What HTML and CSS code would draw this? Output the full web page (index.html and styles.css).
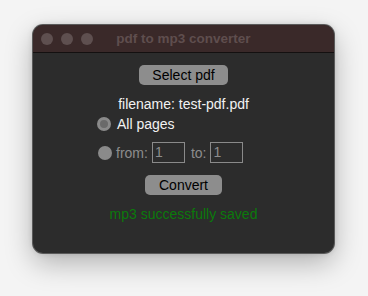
FILE: index.html
```html
<!DOCTYPE html>
<html>
<head>
<meta charset="utf-8">
<link rel="stylesheet" href="styles.css">
</head>
<body>
<div class="window">
  <div class="titlebar">
    <div class="lights"><span class="light"></span><span class="light"></span><span class="light"></span></div>
    <div class="title">pdf to mp3 converter</div>
  </div>
  <div class="content">
    <div class="btn btn-select">Select pdf</div>
    <div class="filename">filename: test-pdf.pdf</div>
    <div class="options">
      <div class="row row-all">
        <span class="radio radio-on"></span>
        <span class="label">All pages</span>
      </div>
      <div class="row row-range">
        <span class="radio radio-off"></span>
        <span class="label dim">from:</span>
        <span class="entry">1</span>
        <span class="label dim to">to:</span>
        <span class="entry">1</span>
      </div>
    </div>
    <div class="btn btn-convert">Convert</div>
    <div class="status">mp3 successfully saved</div>
  </div>
</div>
</body>
</html>
```
FILE: styles.css
```css
html, body {
  margin: 0;
  padding: 0;
}
body {
  width: 368px;
  height: 296px;
  background: #f4f4f4;
  font-family: "Liberation Sans", Arial, sans-serif;
  overflow: hidden;
  padding-top: 25px;
  box-sizing: border-box;
}
.window {
  margin-left: 33px;
  width: 301px;
  height: 228px;
  border-radius: 10px;
  background: #2c2c2c;
  box-shadow: 0 0 0 1px #5a5a5a, 0 10px 28px rgba(0,0,0,0.28), 0 0 6px rgba(0,0,0,0.15);
  overflow: hidden;
  display: flex;
  flex-direction: column;
}
.titlebar {
  height: 27px;
  background: #3a2929;
  border-bottom: 1px solid #141010;
  position: relative;
  display: flex;
  align-items: center;
  justify-content: center;
  flex-shrink: 0;
}
.lights {
  position: absolute;
  left: 8px;
  top: 8px;
  display: flex;
  gap: 8px;
}
.light {
  width: 12px;
  height: 12px;
  border-radius: 50%;
  background: #5e4f4f;
}
.title {
  font-weight: bold;
  font-size: 13.5px;
  color: #5f4e4e;
  margin-left: 0px;
}
.content {
  display: flex;
  flex-direction: column;
  align-items: center;
  padding-top: 12px;
}
.btn {
  height: 20px;
  border-radius: 5px;
  background: #8d8d8d;
  color: #000;
  font-size: 14px;
  line-height: 20px;
  text-align: center;
}
.btn-select {
  width: 89px;
}
.btn-convert {
  width: 77px;
  margin-top: 12px;
}
.filename {
  margin-top: 11px;
  color: #f2f2f2;
  font-size: 14px;
  line-height: 16px;
}
.options {
  align-self: flex-start;
  margin-left: 64px;
  margin-top: 4px;
  display: flex;
  flex-direction: column;
}
.row {
  display: flex;
  align-items: center;
}
.row-all {
  height: 16px;
}
.row-range {
  margin-top: 10px;
  height: 21px;
  margin-left: 1px;
}
.radio {
  width: 14px;
  height: 14px;
  border-radius: 50%;
  box-sizing: border-box;
  flex-shrink: 0;
}
.radio-on {
  background: #6a6a6a;
  border: 3px solid #8a8a8a;
}
.radio-off {
  background: #8a8a8a;
}
.label {
  font-size: 14px;
  color: #f2f2f2;
  margin-left: 6px;
}
.row-range .label {
  margin-left: 4px;
}
.dim {
  color: #8c8c8c;
}
.entry {
  width: 33px;
  height: 21px;
  box-sizing: border-box;
  border: 1px solid #8a8a8a;
  color: #8c8c8c;
  font-size: 14px;
  line-height: 19px;
  padding-left: 2px;
  margin-left: 4px;
}
.row-range .to {
  margin-left: 6px;
}
.status {
  margin-top: 11px;
  font-size: 14px;
  line-height: 16px;
  color: #0b7a0b;
}
```
